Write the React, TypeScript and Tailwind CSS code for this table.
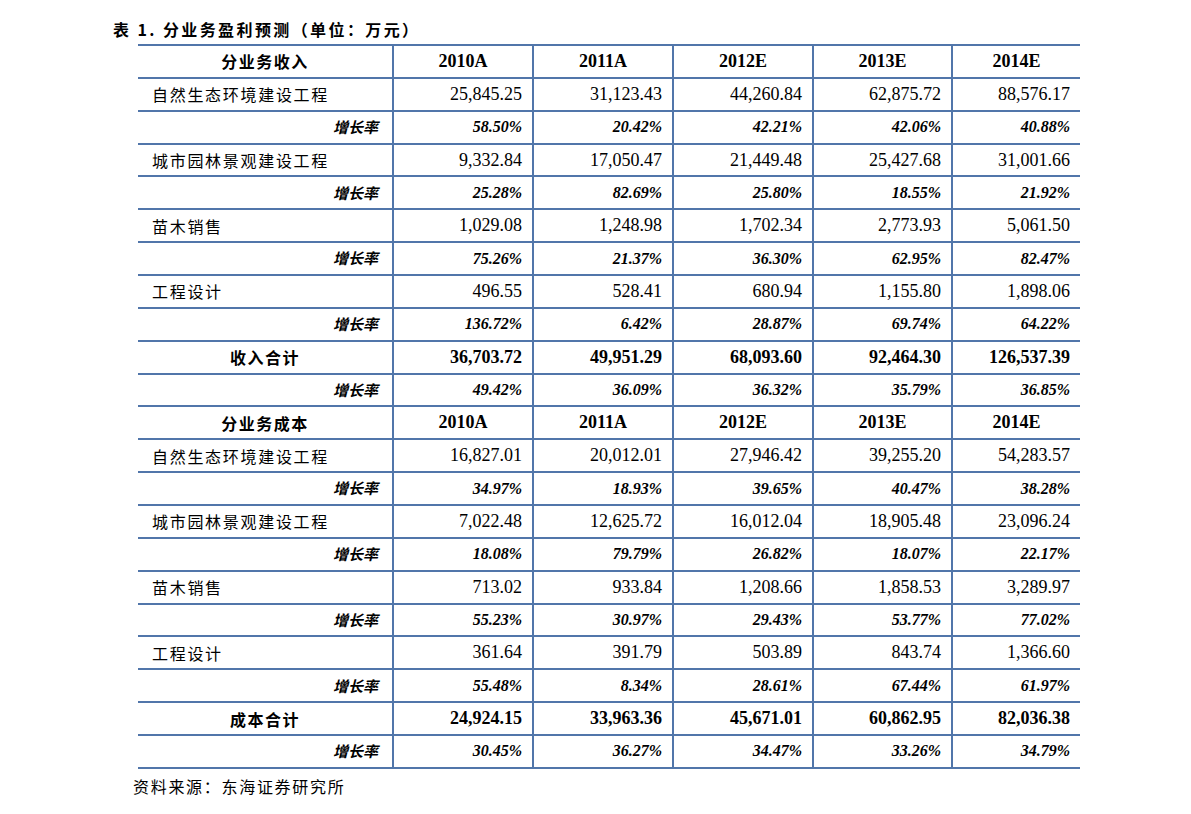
import React from 'react';

type Row =
  | { kind: 'head'; label: string }
  | { kind: 'item'; label: string; values: string[] }
  | { kind: 'rate'; values: string[] }
  | { kind: 'total'; label: string; values: string[] };

const years = ['2010A', '2011A', '2012E', '2013E', '2014E'];

const rows: Row[] = [
  { kind: 'head', label: '分业务收入' },
  { kind: 'item', label: '自然生态环境建设工程', values: ['25,845.25', '31,123.43', '44,260.84', '62,875.72', '88,576.17'] },
  { kind: 'rate', values: ['58.50%', '20.42%', '42.21%', '42.06%', '40.88%'] },
  { kind: 'item', label: '城市园林景观建设工程', values: ['9,332.84', '17,050.47', '21,449.48', '25,427.68', '31,001.66'] },
  { kind: 'rate', values: ['25.28%', '82.69%', '25.80%', '18.55%', '21.92%'] },
  { kind: 'item', label: '苗木销售', values: ['1,029.08', '1,248.98', '1,702.34', '2,773.93', '5,061.50'] },
  { kind: 'rate', values: ['75.26%', '21.37%', '36.30%', '62.95%', '82.47%'] },
  { kind: 'item', label: '工程设计', values: ['496.55', '528.41', '680.94', '1,155.80', '1,898.06'] },
  { kind: 'rate', values: ['136.72%', '6.42%', '28.87%', '69.74%', '64.22%'] },
  { kind: 'total', label: '收入合计', values: ['36,703.72', '49,951.29', '68,093.60', '92,464.30', '126,537.39'] },
  { kind: 'rate', values: ['49.42%', '36.09%', '36.32%', '35.79%', '36.85%'] },
  { kind: 'head', label: '分业务成本' },
  { kind: 'item', label: '自然生态环境建设工程', values: ['16,827.01', '20,012.01', '27,946.42', '39,255.20', '54,283.57'] },
  { kind: 'rate', values: ['34.97%', '18.93%', '39.65%', '40.47%', '38.28%'] },
  { kind: 'item', label: '城市园林景观建设工程', values: ['7,022.48', '12,625.72', '16,012.04', '18,905.48', '23,096.24'] },
  { kind: 'rate', values: ['18.08%', '79.79%', '26.82%', '18.07%', '22.17%'] },
  { kind: 'item', label: '苗木销售', values: ['713.02', '933.84', '1,208.66', '1,858.53', '3,289.97'] },
  { kind: 'rate', values: ['55.23%', '30.97%', '29.43%', '53.77%', '77.02%'] },
  { kind: 'item', label: '工程设计', values: ['361.64', '391.79', '503.89', '843.74', '1,366.60'] },
  { kind: 'rate', values: ['55.48%', '8.34%', '28.61%', '67.44%', '61.97%'] },
  { kind: 'total', label: '成本合计', values: ['24,924.15', '33,963.36', '45,671.01', '60,862.95', '82,036.38'] },
  { kind: 'rate', values: ['30.45%', '36.27%', '34.47%', '33.26%', '34.79%'] },
];

const serif = "font-['Liberation_Serif','Times_New_Roman','Noto_Sans_CJK_SC',serif]";
const cjk = "font-['Noto_Sans_CJK_SC',sans-serif]";

function TableRow({ row }: { row: Row }) {
  let first: React.ReactNode;
  let cells: React.ReactNode[];

  if (row.kind === 'head') {
    first = <div className={`${cjk} font-bold text-[16px] tracking-[1.5px] text-center w-full`}>{row.label}</div>;
    cells = years.map((y) => (
      <div key={y} className={`${serif} font-bold text-[18px] text-center w-full`}>{y}</div>
    ));
  } else if (row.kind === 'item') {
    first = <div className={`${cjk} text-[16px] tracking-[1.7px] pl-[14px] w-full`}>{row.label}</div>;
    cells = row.values.map((v, i) => (
      <div key={i} className={`${serif} text-[18px] text-right pr-[10px] w-full`}>{v}</div>
    ));
  } else if (row.kind === 'total') {
    first = <div className={`${cjk} font-bold text-[16px] tracking-[1.5px] text-center w-full`}>{row.label}</div>;
    cells = row.values.map((v, i) => (
      <div key={i} className={`${serif} font-bold text-[18px] text-right pr-[10px] w-full`}>{v}</div>
    ));
  } else {
    first = <div className={`${cjk} font-bold italic text-[15px] text-right pr-[14px] w-full`}>增长率</div>;
    cells = row.values.map((v, i) => (
      <div key={i} className={`${serif} font-bold italic text-[16px] text-right pr-[10px] w-full`}>{v}</div>
    ));
  }

  return (
    <div className="grid grid-cols-[254px_140px_140px_140px_139px_129px] h-[32.86px] border-b-2 border-[#5176aa]">
      <div className="flex items-center">{first}</div>
      {cells.map((c, i) => (
        <div key={i} className="flex items-center border-l-2 border-[#5176aa]">{c}</div>
      ))}
    </div>
  );
}

export default function App() {
  return (
    <div className="w-[1191px] h-[814px] bg-white text-black">
      <div className="pl-[113px] pt-[18px] h-[44px]">
        <div className={`${cjk} font-bold text-[16px] tracking-[2.4px] leading-[22px] whitespace-pre`}>表 1. 分业务盈利预测（单位：万元）</div>
      </div>
      <div className="ml-[138px] w-[942px] border-t-2 border-[#5176aa]">
        {rows.map((r, i) => (
          <TableRow key={i} row={r} />
        ))}
      </div>
      <div className={`${cjk} pl-[133px] pt-[5px] text-[16px] tracking-[1.7px] leading-[24px]`}>资料来源：东海证券研究所</div>
    </div>
  );
}
